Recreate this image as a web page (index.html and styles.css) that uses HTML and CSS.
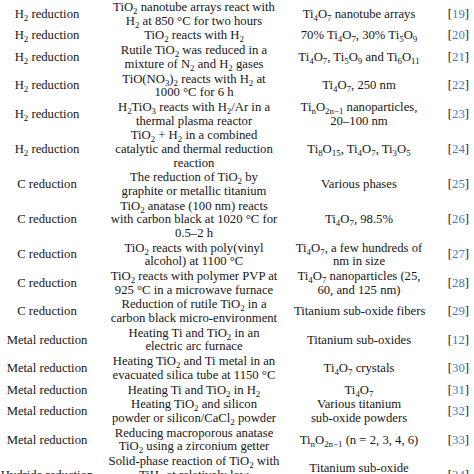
FILE: index.html
```html
<!DOCTYPE html>
<html>
<head>
<meta charset="utf-8">
<link rel="stylesheet" href="styles.css">
</head>
<body>
<table class="methods">
  <colgroup>
    <col class="c-method">
    <col class="c-desc">
    <col class="c-prod">
    <col class="c-ref">
  </colgroup>
  <tbody>
    <tr><td>H<sub>2</sub> reduction</td><td>TiO<sub>2</sub> nanotube arrays react with<br>H<sub>2</sub> at 850 °C for two hours</td><td>Ti<sub>4</sub>O<sub>7</sub> nanotube arrays</td><td class="ref">[<span>19</span>]</td></tr>
    <tr><td>H<sub>2</sub> reduction</td><td>TiO<sub>2</sub> reacts with H<sub>2</sub></td><td>70% Ti<sub>4</sub>O<sub>7</sub>, 30% Ti<sub>5</sub>O<sub>9</sub></td><td class="ref">[<span>20</span>]</td></tr>
    <tr><td>H<sub>2</sub> reduction</td><td>Rutile TiO<sub>2</sub> was reduced in a<br>mixture of N<sub>2</sub> and H<sub>2</sub> gases</td><td>Ti<sub>4</sub>O<sub>7</sub>, Ti<sub>5</sub>O<sub>9</sub> and Ti<sub>6</sub>O<sub>11</sub></td><td class="ref">[<span>21</span>]</td></tr>
    <tr><td>H<sub>2</sub> reduction</td><td>TiO(NO<sub>3</sub>)<sub>2</sub> reacts with H<sub>2</sub> at<br>1000 °C for 6 h</td><td>Ti<sub>4</sub>O<sub>7</sub>, 250 nm</td><td class="ref">[<span>22</span>]</td></tr>
    <tr><td>H<sub>2</sub> reduction</td><td>H<sub>2</sub>TiO<sub>3</sub> reacts with H<sub>2</sub>/Ar in a<br>thermal plasma reactor</td><td>Ti<sub>n</sub>O<sub>2n−1</sub> nanoparticles,<br>20–100 nm</td><td class="ref">[<span>23</span>]</td></tr>
    <tr><td>H<sub>2</sub> reduction</td><td>TiO<sub>2</sub> + H<sub>2</sub> in a combined<br>catalytic and thermal reduction<br>reaction</td><td>Ti<sub>8</sub>O<sub>15</sub>, Ti<sub>4</sub>O<sub>7</sub>, Ti<sub>3</sub>O<sub>5</sub></td><td class="ref">[<span>24</span>]</td></tr>
    <tr><td>C reduction</td><td>The reduction of TiO<sub>2</sub> by<br>graphite or metallic titanium</td><td>Various phases</td><td class="ref">[<span>25</span>]</td></tr>
    <tr><td>C reduction</td><td>TiO<sub>2</sub> anatase (100 nm) reacts<br>with carbon black at 1020 °C for<br>0.5–2 h</td><td>Ti<sub>4</sub>O<sub>7</sub>, 98.5%</td><td class="ref">[<span>26</span>]</td></tr>
    <tr><td>C reduction</td><td>TiO<sub>2</sub> reacts with poly(vinyl<br>alcohol) at 1100 °C</td><td>Ti<sub>4</sub>O<sub>7</sub>, a few hundreds of<br>nm in size</td><td class="ref">[<span>27</span>]</td></tr>
    <tr><td>C reduction</td><td>TiO<sub>2</sub> reacts with polymer PVP at<br>925 °C in a microwave furnace</td><td>Ti<sub>4</sub>O<sub>7</sub> nanoparticles (25,<br>60, and 125 nm)</td><td class="ref">[<span>28</span>]</td></tr>
    <tr><td>C reduction</td><td>Reduction of rutile TiO<sub>2</sub> in a<br>carbon black micro-environment</td><td>Titanium sub-oxide fibers</td><td class="ref">[<span>29</span>]</td></tr>
    <tr><td>Metal reduction</td><td>Heating Ti and TiO<sub>2</sub> in an<br>electric arc furnace</td><td>Titanium sub-oxides</td><td class="ref">[<span>12</span>]</td></tr>
    <tr><td>Metal reduction</td><td>Heating TiO<sub>2</sub> and Ti metal in an<br>evacuated silica tube at 1150 °C</td><td>Ti<sub>4</sub>O<sub>7</sub> crystals</td><td class="ref">[<span>30</span>]</td></tr>
    <tr><td>Metal reduction</td><td>Heating Ti and TiO<sub>2</sub> in H<sub>2</sub></td><td>Ti<sub>4</sub>O<sub>7</sub></td><td class="ref">[<span>31</span>]</td></tr>
    <tr><td>Metal reduction</td><td>Heating TiO<sub>2</sub> and silicon<br>powder or silicon/CaCl<sub>2</sub> powder</td><td>Various titanium<br>sub-oxide powders</td><td class="ref">[<span>32</span>]</td></tr>
    <tr><td>Metal reduction</td><td>Reducing macroporous anatase<br>TiO<sub>2</sub> using a zirconium getter</td><td>Ti<sub>n</sub>O<sub>2n−1</sub> (n = 2, 3, 4, 6)</td><td class="ref">[<span>33</span>]</td></tr>
    <tr><td>Hydride reduction</td><td>Solid-phase reaction of TiO<sub>2</sub> with<br>TiH<sub>2</sub> at relatively low<br>temperature</td><td>Titanium sub-oxide<br>nanoparticles</td><td class="ref">[<span>34</span>]</td></tr>
  </tbody>
</table>
</body>
</html>
```

FILE: styles.css
```css
html, body {
  margin: 0;
  padding: 0;
  background: #ffffff;
  overflow: hidden;
}

body {
  font-family: "Liberation Serif", "Times New Roman", serif;
  font-size: 12.7px;
  line-height: 13.6px;
  color: #161616;
}

.methods {
  border-collapse: collapse;
  table-layout: fixed;
  width: 474px;
  margin-top: 0.5px;
}

.c-method { width: 94px; }
.c-desc { width: 200px; }
.c-prod { width: 130px; }
.c-ref { width: 50px; }

.methods td {
  padding: 0.6px 0;
  text-align: center;
  vertical-align: middle;
  white-space: nowrap;
}

.methods td.ref {
  text-align: right;
  padding-right: 5px;
}

.ref span {
  color: #3f7bc0;
}

sub {
  font-size: 70%;
  line-height: 0;
  vertical-align: -0.32em;
}
```
